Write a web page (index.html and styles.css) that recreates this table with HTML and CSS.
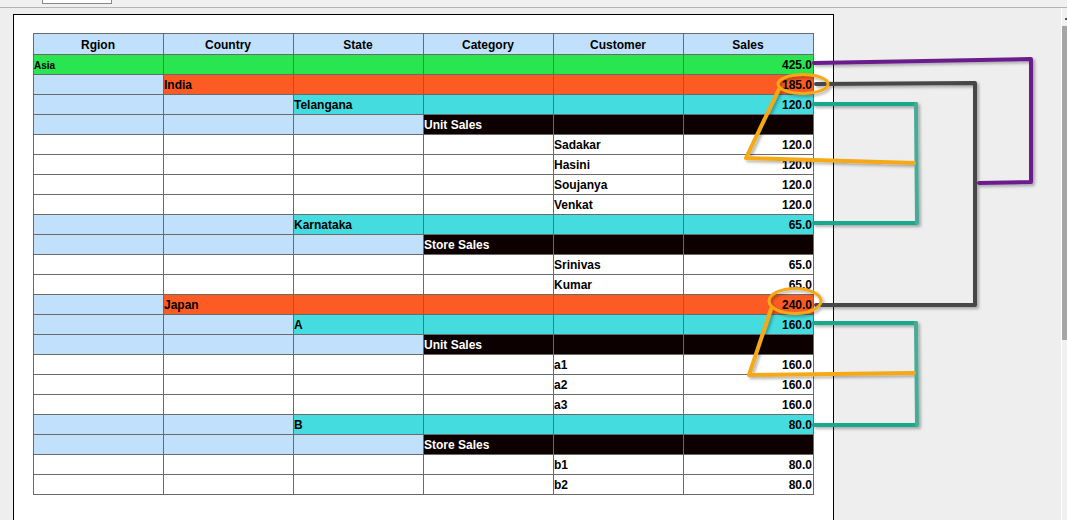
FILE: index.html
```html
<!DOCTYPE html>
<html lang="en">
<head>
  <title>Sales Report Preview</title>
  <meta charset="UTF-8">
  <link rel="stylesheet" href="styles.css">
</head>
<body>
  <div class="toolbar">
    <span class="tool-btn"></span>
  </div>
  <div class="workspace">
    <div class="canvas">
      <div class="page">
        <table class="report">
          <thead>
            <tr>
              <th>Rgion</th>
              <th>Country</th>
              <th>State</th>
              <th>Category</th>
              <th>Customer</th>
              <th>Sales</th>
            </tr>
          </thead>
          <tbody>
            <tr class="lvl-region">
              <td class="small">Asia</td><td></td><td></td><td></td><td></td><td class="num">425.0</td>
            </tr>
            <tr class="lvl-country">
              <td class="blank"></td><td>India</td><td></td><td></td><td></td><td class="num">185.0</td>
            </tr>
            <tr class="lvl-state">
              <td class="blank"></td><td class="blank"></td><td>Telangana</td><td></td><td></td><td class="num">120.0</td>
            </tr>
            <tr class="lvl-cat">
              <td class="blank"></td><td class="blank"></td><td class="blank"></td><td>Unit Sales</td><td></td><td></td>
            </tr>
            <tr><td></td><td></td><td></td><td></td><td>Sadakar</td><td class="num">120.0</td></tr>
            <tr><td></td><td></td><td></td><td></td><td>Hasini</td><td class="num">120.0</td></tr>
            <tr><td></td><td></td><td></td><td></td><td>Soujanya</td><td class="num">120.0</td></tr>
            <tr><td></td><td></td><td></td><td></td><td>Venkat</td><td class="num">120.0</td></tr>
            <tr class="lvl-state">
              <td class="blank"></td><td class="blank"></td><td>Karnataka</td><td></td><td></td><td class="num">65.0</td>
            </tr>
            <tr class="lvl-cat">
              <td class="blank"></td><td class="blank"></td><td class="blank"></td><td>Store Sales</td><td></td><td></td>
            </tr>
            <tr><td></td><td></td><td></td><td></td><td>Srinivas</td><td class="num">65.0</td></tr>
            <tr><td></td><td></td><td></td><td></td><td>Kumar</td><td class="num">65.0</td></tr>
            <tr class="lvl-country">
              <td class="blank"></td><td>Japan</td><td></td><td></td><td></td><td class="num">240.0</td>
            </tr>
            <tr class="lvl-state">
              <td class="blank"></td><td class="blank"></td><td>A</td><td></td><td></td><td class="num">160.0</td>
            </tr>
            <tr class="lvl-cat">
              <td class="blank"></td><td class="blank"></td><td class="blank"></td><td>Unit Sales</td><td></td><td></td>
            </tr>
            <tr><td></td><td></td><td></td><td></td><td>a1</td><td class="num">160.0</td></tr>
            <tr><td></td><td></td><td></td><td></td><td>a2</td><td class="num">160.0</td></tr>
            <tr><td></td><td></td><td></td><td></td><td>a3</td><td class="num">160.0</td></tr>
            <tr class="lvl-state">
              <td class="blank"></td><td class="blank"></td><td>B</td><td></td><td></td><td class="num">80.0</td>
            </tr>
            <tr class="lvl-cat">
              <td class="blank"></td><td class="blank"></td><td class="blank"></td><td>Store Sales</td><td></td><td></td>
            </tr>
            <tr><td></td><td></td><td></td><td></td><td>b1</td><td class="num">80.0</td></tr>
            <tr><td></td><td></td><td></td><td></td><td>b2</td><td class="num">80.0</td></tr>
          </tbody>
        </table>
      </div>
    </div>
    <div class="scrollbar">
      <span class="scroll-arrow"></span>
      <span class="scroll-thumb"></span>
    </div>
  </div>

  <!-- hand drawn notes over the report -->
  <svg class="notes" width="1067" height="520" viewBox="0 0 1067 520">
    <defs>
      <filter id="shadow" x="-10%" y="-10%" width="130%" height="130%">
        <feDropShadow dx="2" dy="2" stdDeviation="1.5" flood-color="#000" flood-opacity="0.3"/>
      </filter>
    </defs>
    <g fill="none" stroke-linecap="round" stroke-linejoin="round" filter="url(#shadow)">
      <polyline points="814,63 1031,59 1031,182 979,183" stroke="#6a1f8c" stroke-width="4"/>
      <polyline points="816,84 975,83 975,305 816,305" stroke="#474747" stroke-width="4"/>
      <polyline points="814,104 916,104" stroke="#17a98a" stroke-width="4"/>
      <polyline points="814,223 916,223" stroke="#17a98a" stroke-width="4"/>
      <polyline points="916,104 917,223" stroke="#49ab97" stroke-width="4"/>
      <polyline points="814,323 916,323" stroke="#17a98a" stroke-width="4"/>
      <polyline points="814,425 916,425" stroke="#17a98a" stroke-width="4"/>
      <polyline points="916,323 917,425" stroke="#49ab97" stroke-width="4"/>
      <ellipse cx="803" cy="84" rx="25" ry="9.5" stroke="#f6a912" stroke-width="3"/>
      <polyline points="779,89 746,158 914,163" stroke="#f6a912" stroke-width="4"/>
      <ellipse cx="795" cy="301" rx="26" ry="12.5" stroke="#f6a912" stroke-width="3"/>
      <polyline points="771,309 749,375 914,373" stroke="#f6a912" stroke-width="4"/>
    </g>
  </svg>
</body>
</html>
```

FILE: styles.css
```css
/* page base */
body {
  margin: 0;
  height: 520px;
  overflow: hidden;
  position: relative;
  background: #efefef;
  font-family: "Liberation Sans", Arial, sans-serif;
}

/* top toolbar strip */
.toolbar {
  height: 7px;
  background: #f0f0f0;
  border-bottom: 1px solid #b4b4b4;
}

.tool-btn {
  display: block;
  margin-left: 42px;
  width: 68px;
  height: 3px;
  background: #fff;
  border: 1px solid #888;
  border-top: none;
}

/* workspace with preview and scrollbar */
.workspace {
  display: flex;
  height: 512px;
}

.canvas {
  flex: 1;
  background: #eeeeee;
  padding: 6px 0 0 13px;
}

.page {
  width: 821px;
  height: 520px;
  background: #fff;
  border: 1px solid #000;
  padding: 18px 0 0 19px;
  box-sizing: border-box;
}

/* scrollbar */
.scrollbar {
  width: 5px;
  border-left: 1px solid #fff;
  background: #f0f0f0;
  position: relative;
}

.scroll-arrow {
  position: absolute;
  top: 10px;
  right: 0;
  width: 2px;
  height: 2px;
  background: #555;
}

.scroll-thumb {
  display: block;
  margin-top: 18px;
  height: 314px;
  background: #a6a6a6;
}

/* report table */
.report {
  border-collapse: collapse;
  table-layout: fixed;
  width: 781px;
}

.report th, .report td {
  border: 1px solid #6a6a6a;
  padding: 2px 1px 0 0;
  font-size: 12px;
  font-weight: bold;
  color: #000;
  text-align: left;
  white-space: nowrap;
  overflow: hidden;
  height: 17px;
  line-height: 17px;
}

.report th {
  background: #c0e0fc;
  text-align: center;
  height: 18px;
  line-height: 18px;
}

.report td.num {
  text-align: right;
}

.report td.small {
  font-size: 10px;
}

/* group level colours */
.lvl-region td {
  background: #29e54f;
}

.lvl-country td {
  background: #fc5c24;
}

.lvl-state td {
  background: #44dcdf;
}

.lvl-cat td {
  background: #0c0000;
  color: #fff;
}

.report td.blank {
  background: #c0e0fc;
}

/* annotation overlay */
.notes {
  position: absolute;
  top: 0;
  left: 0;
  pointer-events: none;
}
```
